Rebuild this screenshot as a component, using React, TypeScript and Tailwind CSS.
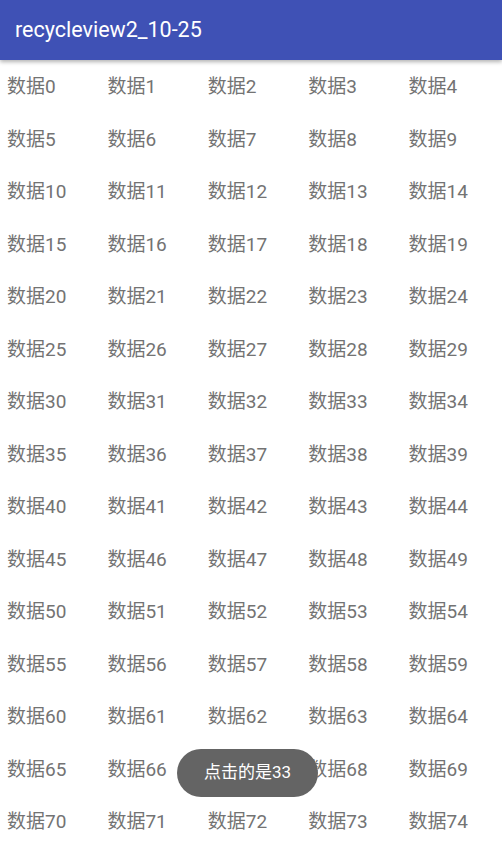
const items = Array.from({ length: 75 }, (_, i) => i);

export default function App() {
  return (
    <div className="relative h-[848px] w-[502px] overflow-hidden bg-white font-['Roboto','Noto_Sans_CJK_SC',sans-serif]">
      <header className="relative z-10 flex h-[60px] items-center bg-[#3f51b5] px-[15px] shadow-[0_2px_4px_rgba(0,0,0,0.3)]">
        <h1 className="text-[21.5px] text-white">recycleview2_10-25</h1>
      </header>

      <div className="grid grid-cols-5 pt-px">
        {items.map((i) => (
          <div key={i} className="flex h-[52.5px] items-center pl-[7px] text-[19px] text-[#737373]">
            数据{i}
          </div>
        ))}
      </div>

      <div className="absolute left-[177px] top-[749px] flex h-[48px] w-[141px] items-center justify-center rounded-full bg-[#646464] text-[17px] text-white">
        点击的是33
      </div>
    </div>
  );
}
